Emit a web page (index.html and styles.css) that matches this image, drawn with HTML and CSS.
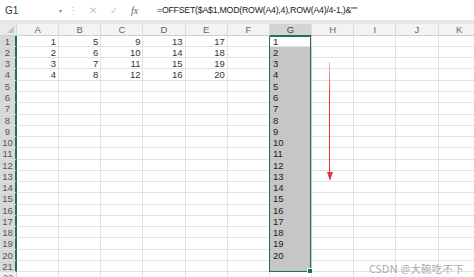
FILE: index.html
```html
<!DOCTYPE html>
<html lang="zh">
<head>
    <meta charset="UTF-8">
    <title>Excel OFFSET</title>
    <link rel="stylesheet" href="styles.css">
</head>
<body>
<div class="app">
    <div class="formula-bar">
        <div class="name-box"><span>G1</span><span class="caret">▾</span></div>
        <div class="fb-sep">⋮</div>
        <div class="fb-icons">
            <span class="fb-btn">✕</span>
            <span class="fb-btn">✓</span>
            <span class="fb-fx">fx</span>
        </div>
        <div class="formula">=OFFSET($A$1,MOD(ROW(A4),4),ROW(A4)/4-1,)&amp;""</div>
    </div>
    <div class="strip"></div>
    <div class="sheet">
        <div class="grid" id="grid"></div>
        <div class="selection"><span class="handle"></span></div>
        <div class="arrow"><span class="shaft"></span><span class="head"></span></div>
        <div class="watermark">CSDN @大碗吃不下</div>
    </div>
</div>

<script>
    const cols = ["A", "B", "C", "D", "E", "F", "G", "H", "I", "J", "K"];
    const grid = document.getElementById("grid");
    let html = '<div class="corner"></div>';
    cols.forEach(c => {
        html += `<div class="col-head${c === "G" ? " active" : ""}">${c}</div>`;
    });
    for (let r = 1; r <= 22; r++) {
        html += `<div class="row-head${r <= 21 ? " active" : ""}">${r}</div>`;
        cols.forEach((c, i) => {
            let val = "";
            let cls = "cell";
            if (r <= 4 && i < 5) val = r + i * 4;
            if (c === "G") {
                cls += " text";
                if (r >= 2 && r <= 21) cls += " sel";
                if (r <= 20) val = r;
            }
            html += `<div class="${cls}">${val}</div>`;
        });
    }
    grid.innerHTML = html;
</script>
</body>
</html>
```

FILE: styles.css
```css
body {
    margin: 0;
    font-family: "Liberation Sans", Arial, sans-serif;
    background: #fff;
    overflow: hidden;
}
.app {
    width: 474px;
    height: 277px;
    overflow: hidden;
}
.formula-bar {
    display: flex;
    align-items: center;
    height: 20px;
    background: #fff;
    font-size: 10px;
    color: #333;
}
.name-box {
    display: flex;
    justify-content: space-between;
    align-items: center;
    width: 57px;
    padding-left: 5px;
    padding-right: 2px;
}
.caret {
    font-size: 6px;
    color: #888;
}
.fb-sep {
    width: 18px;
    text-align: center;
    color: #bbb;
    font-size: 10px;
}
.fb-icons {
    display: flex;
    align-items: center;
    gap: 13px;
    padding-left: 7px;
    width: 68px;
    color: #c4c4c4;
}
.fb-btn {
    font-size: 10px;
}
.fb-fx {
    font-family: "Liberation Serif", serif;
    font-style: italic;
    color: #666;
    font-size: 10px;
}
.formula {
    font-size: 8.8px;
    letter-spacing: -0.25px;
    color: #222;
    white-space: nowrap;
}
.strip {
    height: 4px;
    background: #e6e6e6;
}
.sheet {
    position: relative;
}
.grid {
    display: grid;
    grid-template-columns: 17px repeat(11, 42.17px);
    grid-template-rows: 11.7px;
    grid-auto-rows: 11.27px;
    font-size: 9.5px;
}
.corner {
    background: #eaeaea;
    border-right: 1px solid #d8d8d8;
    border-bottom: 1px solid #d0d0d0;
    position: relative;
}
.corner::after {
    content: "";
    position: absolute;
    right: 2px;
    bottom: 2px;
    border-left: 7px solid transparent;
    border-bottom: 7px solid #c4c4c4;
}
.col-head {
    background: #f3f3f3;
    color: #666;
    text-align: center;
    line-height: 11px;
    border-right: 1px solid #dcdcdc;
    border-bottom: 1px solid #d0d0d0;
}
.col-head.active {
    background: #d4d4d4;
    border-bottom: 1px solid #217346;
    color: #444;
}
.row-head {
    background: #eeeeee;
    color: #666;
    text-align: center;
    line-height: 11px;
    border-right: 1px solid #d0d0d0;
    border-bottom: 1px solid #dcdcdc;
}
.row-head.active {
    background: #d8d8d8;
    border-right: 2px solid #217346;
    color: #555;
}
.cell {
    border-right: 1px solid #e2e2e2;
    border-bottom: 1px solid #e2e2e2;
    text-align: right;
    padding-right: 2px;
    line-height: 11px;
    color: #333;
    white-space: nowrap;
}
.cell.text {
    text-align: left;
    padding-left: 3px;
    padding-right: 0;
    color: #222;
}
.cell.sel {
    background: #c6c6c6;
    border-bottom-color: #c6c6c6;
    border-right-color: #c6c6c6;
}
.selection {
    position: absolute;
    left: 269px;
    top: 11.7px;
    width: 42.17px;
    height: 236.7px;
    box-sizing: border-box;
    border: 1.5px solid #217346;
}
.handle {
    position: absolute;
    right: -3px;
    bottom: -3px;
    width: 4px;
    height: 4px;
    background: #217346;
    border: 1px solid #fff;
}
.arrow {
    position: absolute;
    left: 326px;
    top: 38px;
    width: 7px;
    display: flex;
    flex-direction: column;
    align-items: center;
}
.shaft {
    width: 1.8px;
    height: 110px;
    background: linear-gradient(#f7b8ba, #e8343a 30%, #e8343a);
}
.head {
    width: 0;
    height: 0;
    border-left: 3.5px solid transparent;
    border-right: 3.5px solid transparent;
    border-top: 9px solid #e8343a;
}
.watermark {
    position: absolute;
    left: 369px;
    top: 237px;
    font-family: "Noto Sans", "Noto Sans CJK SC", sans-serif;
    font-size: 10.5px;
    color: #aaa;
    letter-spacing: 0.2px;
}
```
